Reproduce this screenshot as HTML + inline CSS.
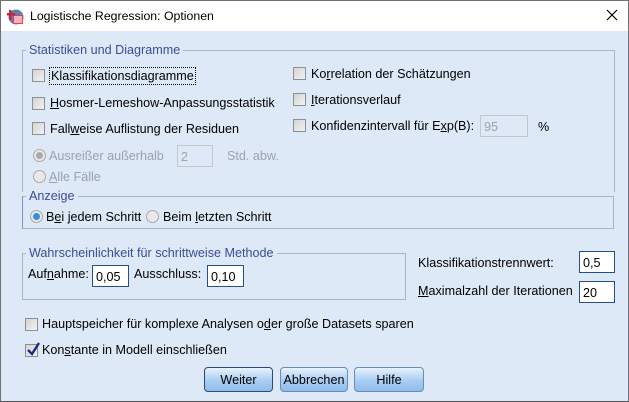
<!DOCTYPE html><html><head><meta charset="utf-8"><style>
*{margin:0;padding:0;box-sizing:border-box}
body{width:629px;height:402px;overflow:hidden;background:#dee9f7;font-family:"Liberation Sans",sans-serif;font-size:12.6px;color:#000;position:relative}
.a{position:absolute;white-space:nowrap}
#win{position:absolute;left:0;top:0;width:629px;height:402px;border:1px solid #707070;border-bottom-color:#555}
#tb{position:absolute;left:1px;top:1px;width:627px;height:30px;background:#fff}
.fr{position:absolute;border:1px solid #a6b4c6}
.gt{position:absolute;background:#dee9f7;color:#3e4b99;padding:0 3px}
.cb{position:absolute;width:13px;height:13px;border:1px solid #8e8f8f;background:linear-gradient(135deg,#d4d4d4,#f2f2f2)}
.rb{position:absolute;width:13px;height:13px;border-radius:50%;border:1px solid #a9a9a9;background:#e8e8e8}
.rb.on::after{content:"";position:absolute;left:2px;top:2px;width:7px;height:7px;border-radius:50%;background:#3a8ee0}
.rb.dis.on::after{background:#a9a9a9}
.in{position:absolute;height:22px;border:1px solid #24508a;background:#fff;padding:4px 0 0 3px}
.in.dis{border-color:#c6c6c6;background:#dee9f7;color:#a0a0a0}
.dis{color:#9aa2ac}
.bt{position:absolute;top:367px;height:25px;border:1px solid #6a8bb5;border-radius:4px;background:linear-gradient(#e8f2fd,#a8cdf2 55%,#8fbdec);text-align:center;padding-top:5px}
u{text-decoration:underline}
</style></head><body>
<div id="win"></div>
<div id="tb"></div>
<svg class="a" style="left:7px;top:7px" width="18" height="18"><circle cx="9" cy="10" r="7.5" fill="#5a83b5"/><rect x="6" y="8" width="10" height="9" fill="#e04050"/><rect x="7" y="9" width="8" height="7" fill="#fff" opacity=".6"/><rect x="2" y="3" width="2.5" height="10" fill="#c0283a"/><rect x="0" y="6" width="8" height="2.5" fill="#c0283a"/></svg>
<div class="a" style="left:30px;top:9px;font-size:12.3px">Logistische Regression: Optionen</div>
<svg class="a" style="left:606px;top:9px" width="12" height="12"><path d="M1 1L11 11M11 1L1 11" stroke="#000" stroke-width="1.2"/></svg>

<div class="fr" style="left:22px;top:50px;width:593px;height:142px;border-bottom:none"></div>
<div class="gt" style="left:26px;top:43px">Statistiken und Diagramme</div>
<div class="fr" style="left:22px;top:196px;width:592px;height:33px;border-left-color:#7f93ad"></div>
<div class="gt" style="left:26px;top:189px">Anzeige</div>

<div class="cb" style="left:32px;top:69px"></div><div class="a" style="left:49px;top:67px;border:1px dotted #000;padding:1px 1px">Klassifikationsdiagramme</div>
<div class="cb" style="left:32px;top:97px"></div><div class="a" style="left:50px;top:96px"><u>H</u>osmer-Lemeshow-Anpassungsstatistik</div>
<div class="cb" style="left:32px;top:122px"></div><div class="a" style="left:50px;top:122px">Fall<u>w</u>eise Auflistung der Residuen</div>
<div class="rb dis on" style="left:33px;top:149px"></div><div class="a dis" style="left:49px;top:149px">Ausreißer außerhalb</div>
<div class="in dis" style="left:177px;top:145px;width:36px">2</div>
<div class="a dis" style="left:227px;top:149px">Std. abw.</div>
<div class="rb dis" style="left:33px;top:170px"></div><div class="a dis" style="left:49px;top:170px"><u>A</u>lle Fälle</div>

<div class="cb" style="left:293px;top:67px"></div><div class="a" style="left:311px;top:67px">Ko<u>r</u>relation der Schätzungen</div>
<div class="cb" style="left:293px;top:93px"></div><div class="a" style="left:311px;top:93px"><u>I</u>terationsverlauf</div>
<div class="cb" style="left:293px;top:119px"></div><div class="a" style="left:311px;top:119px">Konfidenzintervall für E<u>x</u>p(B):</div>
<div class="in dis" style="left:480px;top:115px;width:48px">95</div>
<div class="a" style="left:538px;top:120px">%</div>

<div class="rb on" style="left:30px;top:210px"></div><div class="a" style="left:46px;top:210px">B<u>e</u>i jedem Schritt</div>
<div class="rb" style="left:146px;top:210px"></div><div class="a" style="left:163px;top:210px">Beim <u>l</u>etzten Schritt</div>

<div class="fr" style="left:22px;top:253px;width:384px;height:47px"></div>
<div class="gt" style="left:26px;top:246px">Wahrscheinlichkeit für schrittweise Methode</div>
<div class="a" style="left:28px;top:267px">Auf<u>n</u>ahme:</div>
<div class="in" style="left:92px;top:265px;width:37px">0,05</div>
<div class="a" style="left:134px;top:267px">Ausschluss:</div>
<div class="in" style="left:207px;top:265px;width:37px">0,10</div>

<div class="a" style="left:418px;top:256px">Klassifikationstrennwert:</div>
<div class="in" style="left:579px;top:251px;width:36px">0,5</div>
<div class="a" style="left:418px;top:284px"><u>M</u>aximalzahl der Iterationen</div>
<div class="in" style="left:579px;top:281px;width:36px">20</div>

<div class="cb" style="left:25px;top:318px"></div><div class="a" style="left:42px;top:317px">Hauptspeicher für komplexe Analysen o<u>d</u>er große Datasets sparen</div>
<div class="cb" style="left:25px;top:344px"></div>
<svg class="a" style="left:25px;top:341px" width="16" height="16"><path d="M3 9L7 13L14 2" stroke="#1c2a8a" stroke-width="2.4" fill="none"/></svg>
<div class="a" style="left:42px;top:343px">Kon<u>s</u>tante in Modell einschließen</div>

<div class="bt" style="left:204px;width:69px;border-color:#2f4a6e">Weiter</div>
<div class="bt" style="left:280px;width:68px">Abbrechen</div>
<div class="bt" style="left:354px;width:70px">Hilfe</div>
</body></html>
